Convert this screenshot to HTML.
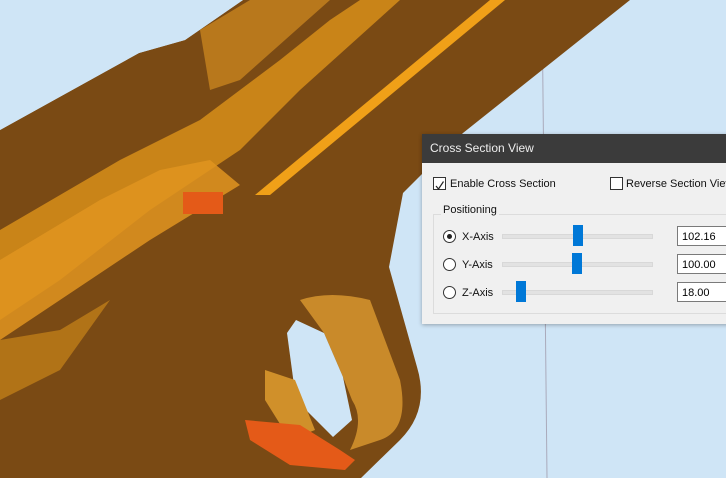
<!DOCTYPE html>
<html><head><meta charset="utf-8"><style>
body{margin:0;width:726px;height:478px;overflow:hidden;background:#cfe5f6;font-family:"Liberation Sans",sans-serif;position:relative}
svg{position:absolute;left:0;top:0}
.dlg{position:absolute;left:422px;top:134px;width:310px;height:190px;background:#f0f0f0;box-shadow:0 1px 4px rgba(0,0,0,.3)}
.tb{height:29px;background:#3b3b3b;color:#eee;font-size:12px;line-height:29px;padding-left:8px}
.t{position:absolute;font-size:11px;color:#111;white-space:nowrap}
.cb{position:absolute;width:11px;height:11px;border:1px solid #333;background:#fff}
.rd{position:absolute;width:11px;height:11px;border:1px solid #333;border-radius:50%;background:#fff}
.trk{position:absolute;left:80px;width:149px;height:3px;background:#e2e2e2;border:1px solid #d8d8d8}
.th{position:absolute;width:10px;height:21px;background:#0078d7}
.in{position:absolute;left:255px;width:60px;height:20px;border:1px solid #7a7a7a;background:#fff;font-size:11px;line-height:20px;padding-left:4px;box-sizing:border-box}
</style></head><body>
<svg width="726" height="478">
<line x1="105" y1="0" x2="105" y2="130" stroke="#aab" stroke-width="1"/>
<line x1="542" y1="0" x2="547" y2="478" stroke="#aab" stroke-width="1"/>
<path d="M243,0 L630,0 L463,133 L403,193 L389,267 L417,367 Q430,410 400,440 L361,478 L0,478 L0,130 L139,53 L185,40 Z" fill="#7a4a14"/>
<path d="M0,230 L120,160 L200,120 L280,60 L330,20 L360,0 L400,0 L300,90 L240,150 L150,210 L60,280 L0,320 Z" fill="#c98418"/>
<path d="M0,260 L100,200 L160,170 L210,160 L240,185 L150,240 L60,300 L0,340 Z" fill="#e09420" opacity=".85"/>
<path d="M200,30 L250,0 L330,0 L240,80 L210,90 Z" fill="#b8781c"/>
<path d="M490,0 L505,0 L270,195 L255,195 Z" fill="#f0a018"/>
<path d="M300,300 Q330,290 370,300 L400,380 Q410,430 380,440 L350,450 Q365,420 352,400 L343,377 L324,333 Z" fill="#c98a2a"/>
<path d="M296,320 L324,333 L343,377 L352,420 L333,437 L296,400 L287,333 Z" fill="#cfe5f6"/>
<path d="M0,340 L60,330 L110,300 L60,370 L0,400 Z" fill="#c98418" opacity=".7"/>
<path d="M265,370 L295,380 L315,430 L290,440 L265,400 Z" fill="#d0902a"/>
<rect x="183" y="192" width="40" height="22" fill="#e45a18"/>
<path d="M245,420 L300,425 L340,450 L355,460 L345,470 L290,465 L250,440 Z" fill="#e45a18"/>
<path d="M0,0 L243,0 L185,40 L139,53 L0,130 Z" fill="#cfe5f6"/>
</svg>
<div class="dlg">
<div class="tb">Cross Section View</div>
<div class="cb" style="left:11px;top:43px"><svg width="11" height="11" style="position:static"><path d="M2,6 L4.5,9 L9.5,1.5" stroke="#222" fill="none" stroke-width="1.2"/></svg></div>
<div class="t" style="left:28px;top:44px">Enable Cross Section</div>
<div class="cb" style="left:188px;top:43px"></div>
<div class="t" style="left:204px;top:44px">Reverse Section View</div>
<div style="position:absolute;left:11px;top:80px;width:310px;height:98px;border:1px solid #dcdcdc"></div>
<div class="t" style="left:19px;top:70px;background:#f0f0f0;padding:0 2px">Positioning</div>
<div class="rd" style="left:21px;top:96px"><div style="width:5px;height:5px;background:#222;border-radius:50%;margin:3px"></div></div>
<div class="t" style="left:40px;top:97px">X-Axis</div>
<div class="trk" style="top:100px"></div><div class="th" style="left:151px;top:91px"></div>
<div class="in" style="top:92px">102.16</div>
<div class="rd" style="left:21px;top:124px"></div>
<div class="t" style="left:40px;top:125px">Y-Axis</div>
<div class="trk" style="top:128px"></div><div class="th" style="left:150px;top:119px"></div>
<div class="in" style="top:120px">100.00</div>
<div class="rd" style="left:21px;top:152px"></div>
<div class="t" style="left:40px;top:153px">Z-Axis</div>
<div class="trk" style="top:156px"></div><div class="th" style="left:94px;top:147px"></div>
<div class="in" style="top:148px">18.00</div>
</div>
</body></html>
